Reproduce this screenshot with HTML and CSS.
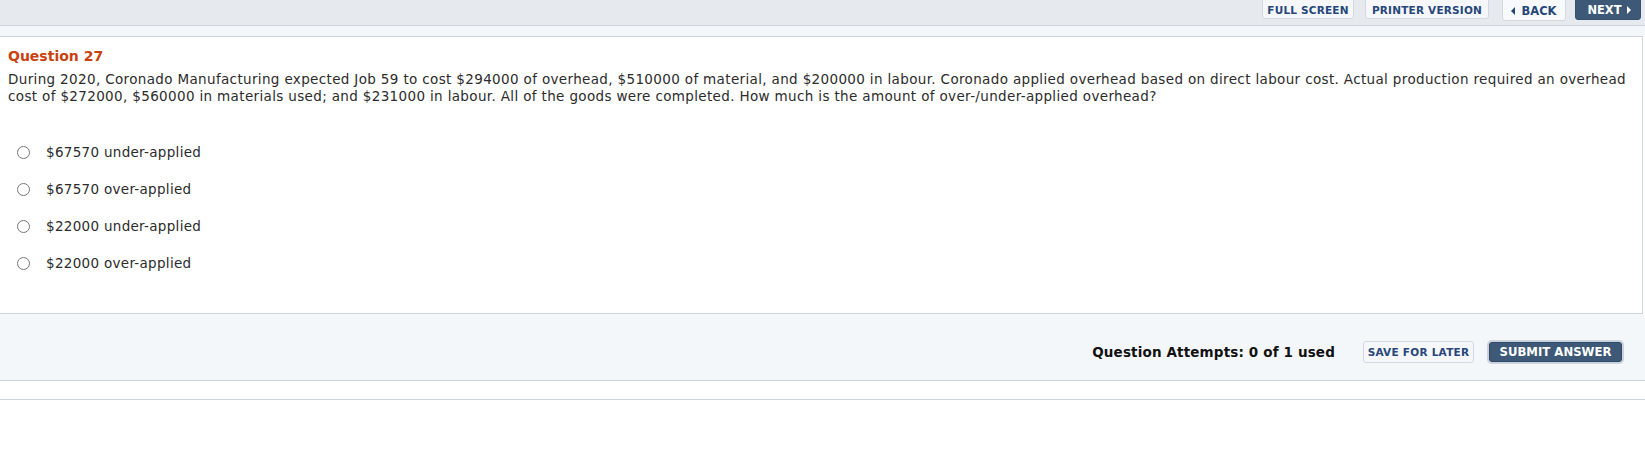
FILE: index.html
```html
<!DOCTYPE html>
<html>
<head>
<meta charset="utf-8">
<link rel="stylesheet" href="styles.css">
</head>
<body>
<div class="topbar">
  <button class="tbtn full">FULL SCREEN</button>
  <button class="tbtn printer">PRINTER VERSION</button>
  <button class="tbtn back"><svg class="arr" width="4" height="8" viewBox="0 0 4 8"><path d="M4 0L0 4L4 8Z"/></svg><span>BACK</span></button>
  <button class="tbtn next"><span>NEXT</span><svg class="arr" width="4" height="8" viewBox="0 0 4 8"><path d="M0 0L4 4L0 8Z"/></svg></button>
</div>
<div class="strip"></div>
<div class="qbox">
  <h2 class="qtitle">Question 27</h2>
  <p class="qtext">During 2020, Coronado Manufacturing expected Job 59 to cost $294000 of overhead, $510000 of material, and $200000 in labour. Coronado applied overhead based on direct labour cost. Actual production required an overhead cost of $272000, $560000 in materials used; and $231000 in labour. All of the goods were completed. How much is the amount of over-/under-applied overhead?</p>
  <ul class="opts">
    <li class="opt"><span class="radio"></span><span>$67570 under-applied</span></li>
    <li class="opt"><span class="radio"></span><span>$67570 over-applied</span></li>
    <li class="opt"><span class="radio"></span><span>$22000 under-applied</span></li>
    <li class="opt"><span class="radio"></span><span>$22000 over-applied</span></li>
  </ul>
</div>
<div class="footer">
  <span class="attempts">Question Attempts: 0 of 1 used</span>
  <button class="save">SAVE FOR LATER</button>
  <button class="submit">SUBMIT ANSWER</button>
</div>
<div class="gap"></div>
</body>
</html>
```
FILE: styles.css
```css
html, body {
  margin: 0;
  padding: 0;
  background: #ffffff;
  font-family: "DejaVu Sans", Verdana, sans-serif;
  color: #2b2b2b;
}
button {
  font-family: "DejaVu Sans", Verdana, sans-serif;
  font-weight: bold;
  margin: 0;
  box-sizing: border-box;
  display: inline-flex;
  align-items: center;
  justify-content: center;
  white-space: nowrap;
  cursor: pointer;
}
.topbar {
  height: 25px;
  background: #e6eaee;
  border-bottom: 1px solid #cdd3dc;
  display: flex;
  justify-content: flex-end;
  align-items: flex-start;
  padding-right: 4px;
  overflow: hidden;
}
.tbtn {
  font-size: 10.5px;
  letter-spacing: 0.2px;
  color: #27477a;
  background: #f5f7fa;
  border: 1px solid #d2d9e2;
  border-radius: 3px;
  height: 22px;
  margin-top: -3px;
  padding: 3px 0 0;
}
.full {
  width: 92px;
}
.printer {
  width: 124px;
  margin-left: 11px;
}
.tbtn.back {
  font-size: 11.5px;
  letter-spacing: 0;
  background: #f8f9fb;
  width: 64px;
  height: 24px;
  margin-left: 13px;
  padding: 3px 0 0;
  gap: 6px;
}
.tbtn.next {
  font-size: 11.5px;
  letter-spacing: 0;
  background: #3d5977;
  border-color: #36516e;
  color: #fff;
  width: 66px;
  height: 23px;
  margin-left: 9px;
  padding: 3px 0 0 2px;
  gap: 5px;
}
.back .arr { fill: #27477a; }
.next .arr { fill: #ffffff; }
.strip {
  height: 10px;
  background: #f4f7fa;
}
.qbox {
  margin-left: -1px;
  width: 1644px;
  height: 278px;
  border: 1px solid #cdd3dc;
  background: #fff;
  padding: 0 2px 0 8px;
  box-sizing: border-box;
}
.qtitle {
  margin: 10px 0 0;
  font-size: 14px;
  font-weight: bold;
  color: #c9410d;
  line-height: 18px;
}
.qtext {
  margin: 6px 0 0;
  font-size: 13.5px;
  letter-spacing: 0.35px;
  line-height: 17px;
  color: #2b2b2b;
}
.opts {
  list-style: none;
  margin: 28px 0 0;
  padding: 0;
}
.opt {
  display: flex;
  align-items: center;
  height: 37px;
  font-size: 13.5px;
  letter-spacing: 0.3px;
  color: #2b2b2b;
}
.radio {
  width: 11px;
  height: 11px;
  border: 1px solid #767676;
  border-radius: 50%;
  margin-left: 9px;
  margin-right: 16px;
  margin-top: 2px;
  background: #fff;
}
.footer {
  height: 67px;
  box-sizing: border-box;
  padding-top: 10px;
  background: #f4f7fa;
  border-bottom: 1px solid #cdd3dc;
  display: flex;
  justify-content: flex-end;
  align-items: center;
  padding-right: 23px;
}
.attempts {
  font-weight: bold;
  font-size: 13.5px;
  letter-spacing: 0.15px;
  color: #111;
  margin-right: 28px;
}
.save {
  font-size: 10.5px;
  letter-spacing: 0.25px;
  color: #27477a;
  background: #f5f7fa;
  border: 1px solid #d2d9e2;
  border-radius: 3px;
  height: 22px;
  width: 111px;
  padding: 0;
  margin-right: 15px;
}
.submit {
  font-size: 11.7px;
  color: #fff;
  background: #3d5977;
  border: 1px solid #2f4a68;
  border-radius: 3px;
  height: 20px;
  width: 133px;
  padding: 0;
  box-shadow: 0 0 0 2px #c9d2dd;
}
.gap {
  height: 18px;
  border-bottom: 1px solid #cdd3dc;
}
```
